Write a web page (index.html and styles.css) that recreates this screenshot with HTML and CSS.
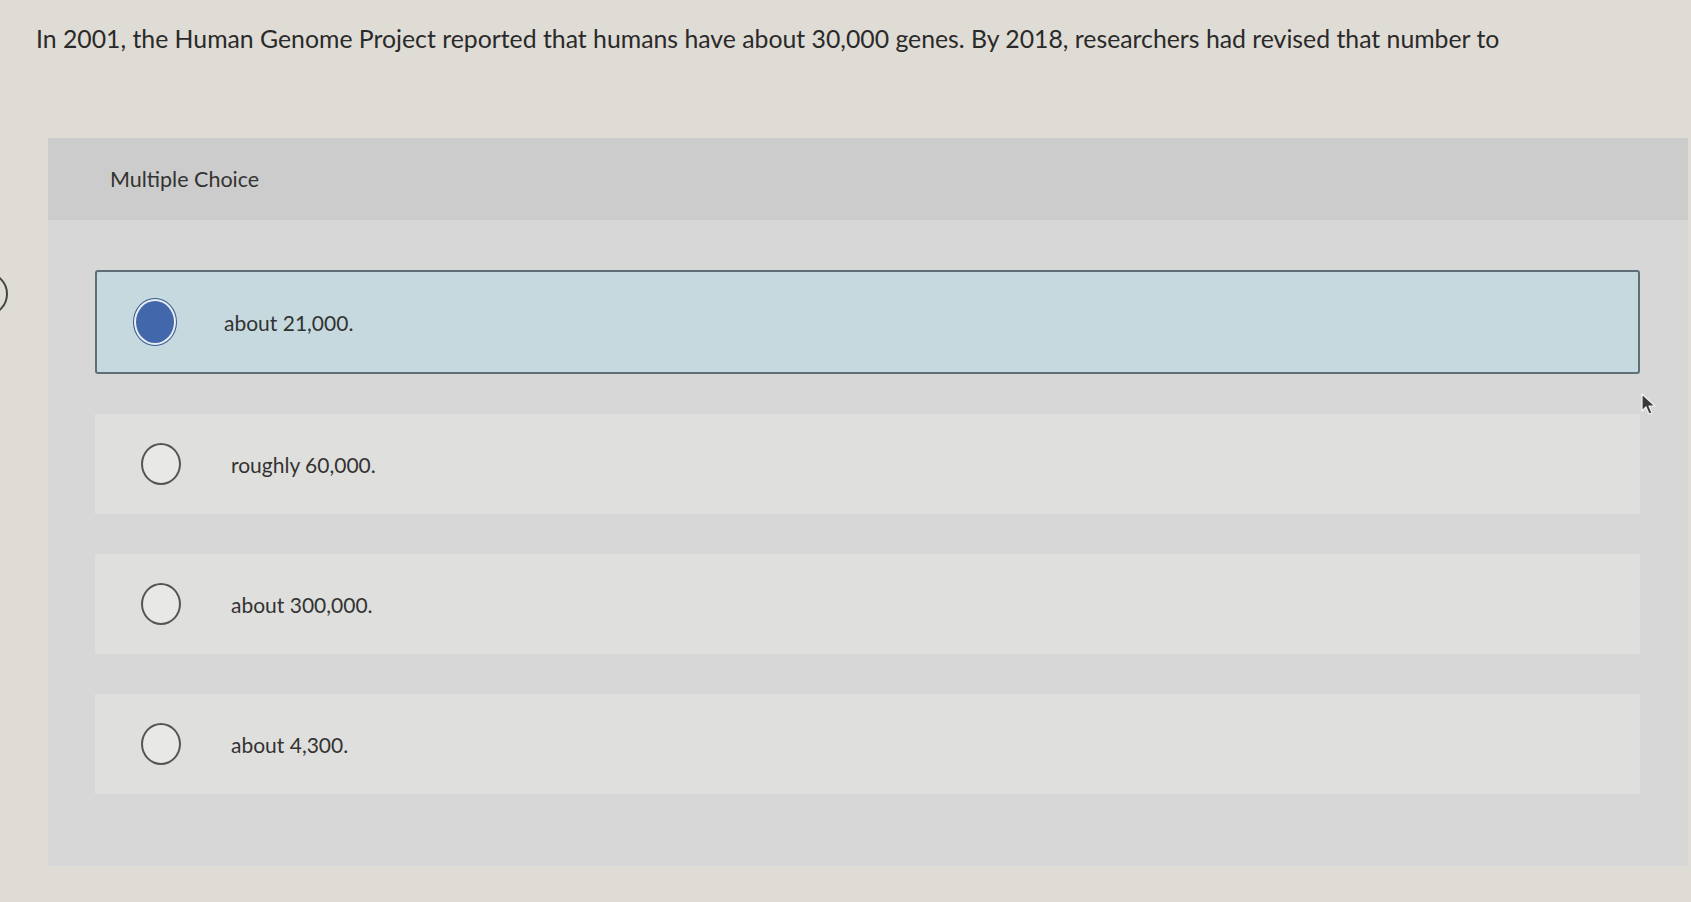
FILE: index.html
```html
<!DOCTYPE html>
<html lang="en">
<head>
  <meta charset="UTF-8" />
  <meta name="viewport" content="width=device-width, initial-scale=1.0" />
  <title>Multiple Choice</title>
  <link rel="stylesheet" href="styles.css">
</head>
<body>
  <div class="side-btn"></div>

  <p class="question">In 2001, the Human Genome Project reported that humans have about 30,000 genes. By 2018, researchers had revised that number to</p>

  <div class="panel">
    <div class="panel-head">Multiple Choice</div>

    <div class="options">
      <label class="option selected">
        <span class="radio"></span>
        <span class="answer">about 21,000.</span>
      </label>
      <label class="option">
        <span class="radio"></span>
        <span class="answer">roughly 60,000.</span>
      </label>
      <label class="option">
        <span class="radio"></span>
        <span class="answer">about 300,000.</span>
      </label>
      <label class="option">
        <span class="radio"></span>
        <span class="answer">about 4,300.</span>
      </label>
    </div>
  </div>

  <!-- mouse pointer -->
  <svg class="pointer" width="18" height="24" viewBox="0 0 18 24">
    <path d="M2 2 L2 19 L6 15 L9 22 L12 21 L9 14 L15 14 Z" fill="#3a3a3a" stroke="#f2f2f2" stroke-width="1.2" stroke-linejoin="round"/>
  </svg>
</body>
</html>
```

FILE: styles.css
```css
body {
  margin: 0;
  background: #dfdbd5;
  font-family: 'Lato', 'Open Sans', sans-serif;
  color: #2a2a2a;
  height: 902px;
  overflow: hidden;
}
.question {
  margin: 0;
  padding: 24px 36px 0;
  font-size: 24.8px;
  line-height: 30px;
}
.panel {
  margin: 84px 3px 0 48px;
  background: #d6d7d6;
  padding-bottom: 72px;
}
.panel-head {
  height: 82px;
  display: flex;
  align-items: center;
  padding-left: 62px;
  background: #cbcccb;
  font-size: 21.5px;
  color: #333;
}
.options {
  padding: 50px 48px 0 47px;
  display: flex;
  flex-direction: column;
  gap: 40px;
}
.option {
  height: 100px;
  display: flex;
  align-items: center;
  background: #dfdfdd;
  cursor: pointer;
}
.option.selected {
  background: #c5d9de;
  border: 2px solid #5e7075;
  border-radius: 3px;
  height: 100px;
}
.radio {
  width: 40px;
  height: 42px;
  margin-left: 46px;
  border: 2px solid #555;
  border-radius: 50%;
  box-sizing: border-box;
  flex-shrink: 0;
  background: #e8e8e6;
}
.selected .radio {
  margin-left: 37px;
  width: 42px;
  height: 46px;
  background: #4267aa;
  border: 2px solid #e8eef2;
  box-shadow: 0 0 0 1px #3b5a92;
}
.answer {
  margin-left: 50px;
  font-size: 21px;
  color: #333;
}
.selected .answer {
  margin-left: 48px;
}
.side-btn {
  position: absolute;
  left: -36px;
  top: 272px;
  width: 40px;
  height: 40px;
  border: 2px solid #444;
  border-radius: 50%;
}
.pointer {
  position: absolute;
  left: 1640px;
  top: 392px;
}
```
